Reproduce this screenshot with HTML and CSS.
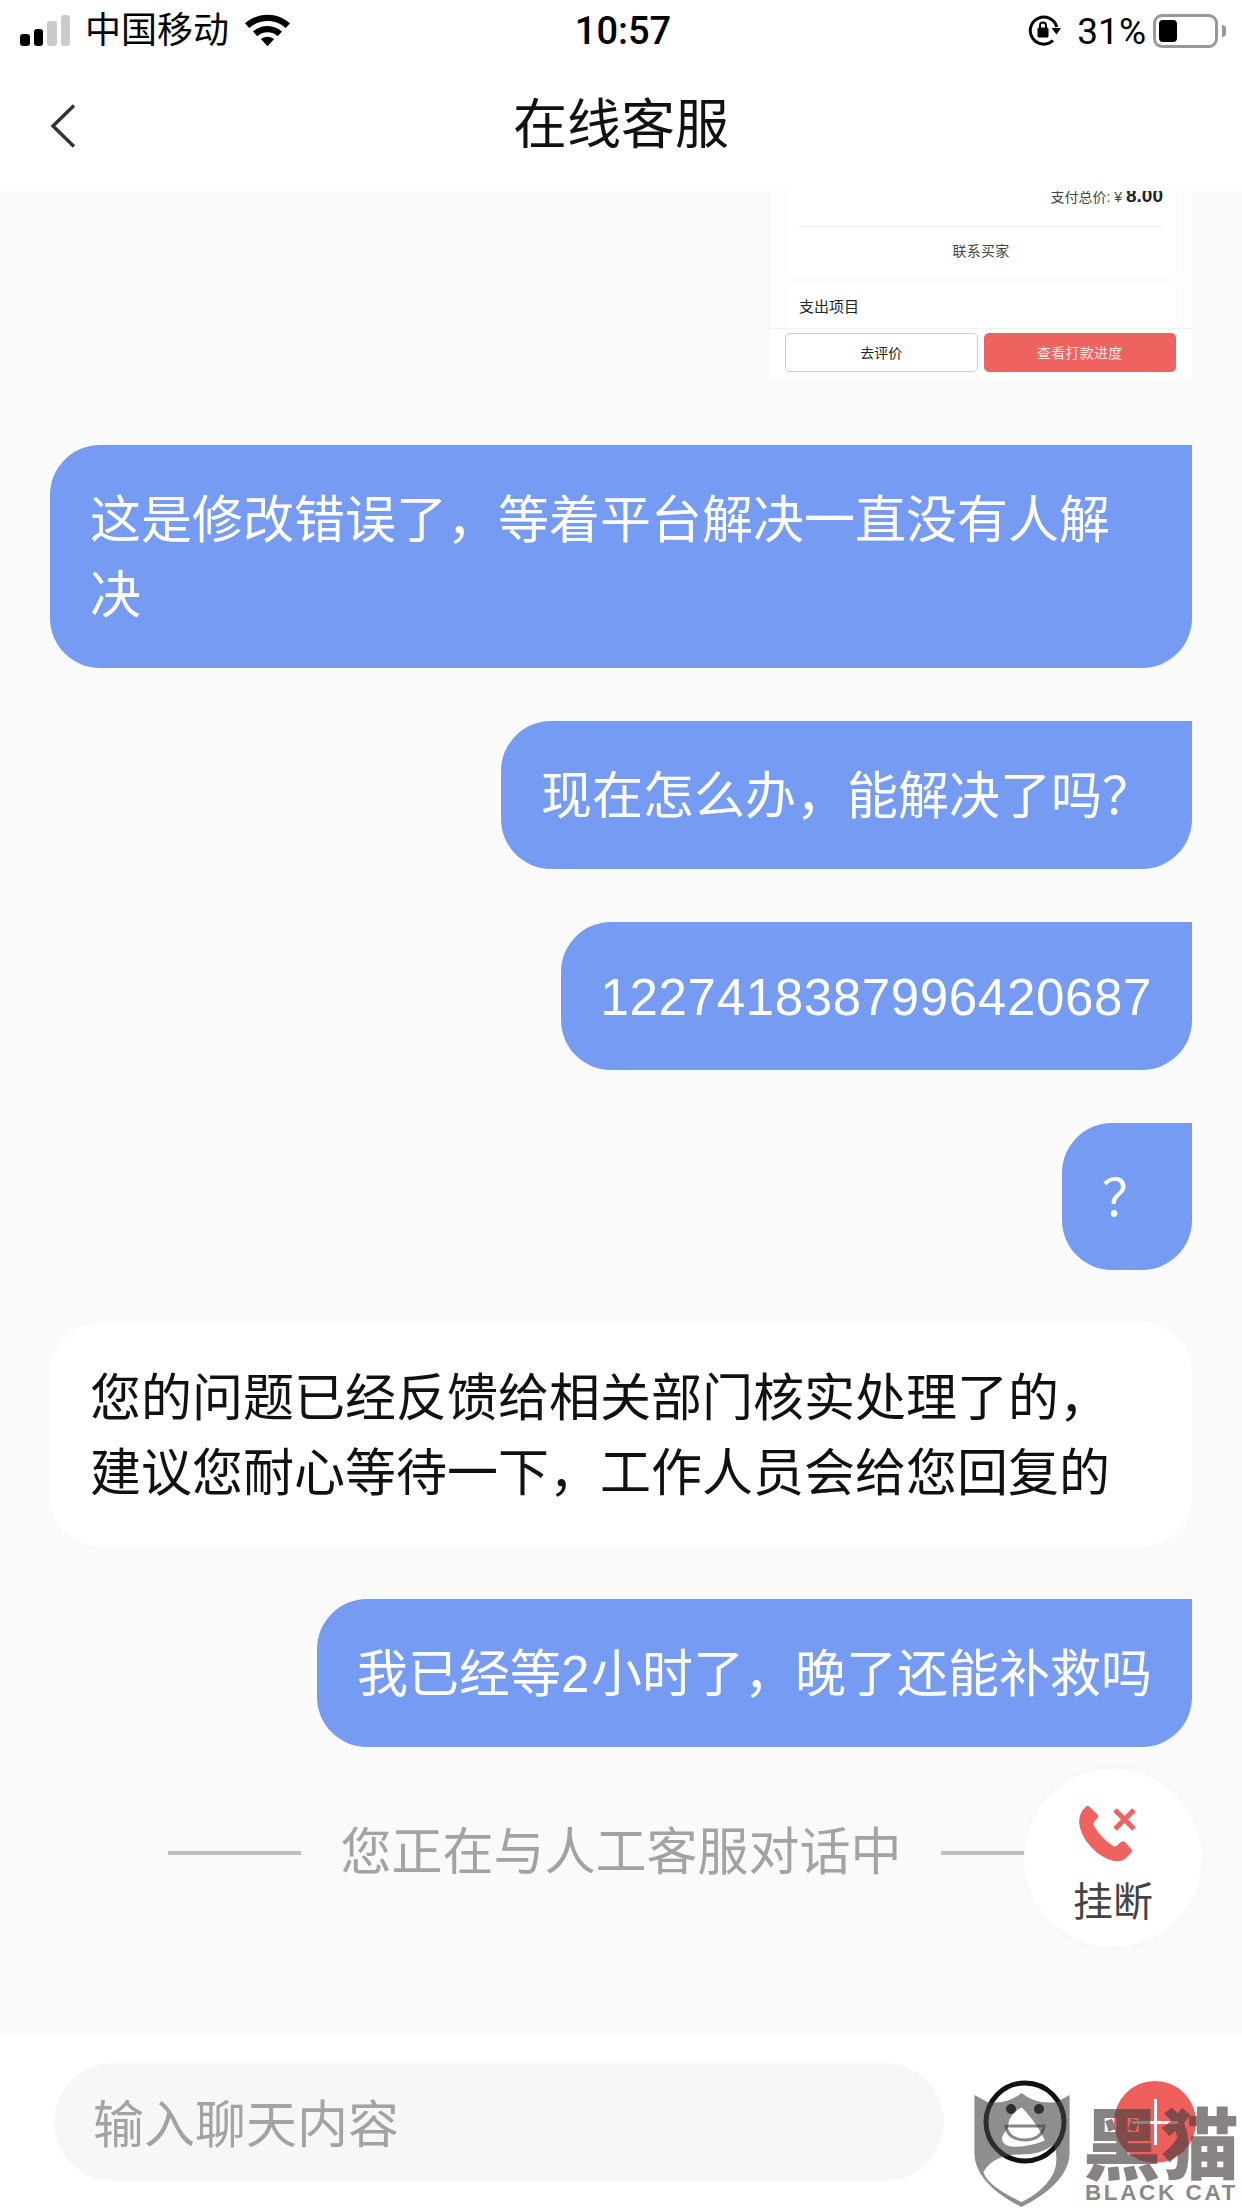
FILE: index.html
```html
<!DOCTYPE html>
<html lang="zh-CN">
<head>
<meta charset="utf-8">
<title>在线客服</title>
<link rel="stylesheet" href="styles.css">
</head>
<body>
<div class="app">
  <header class="top">
    <div class="status">
      <div class="status-left">
        <div class="signal"><i class="b1"></i><i class="b2"></i><i class="b3"></i><i class="b4"></i></div>
        <span class="carrier">中国移动</span>
        <svg class="wifi" viewBox="0 0 44 31"><path d="M22 0C13.500 0 6 3.300 0 8.500L4.200 13C9 8.800 15.200 6.200 22 6.200S35 8.800 39.800 13L44 8.500C38 3.300 30.500 0 22 0Z"/><path d="M22 11C16.500 11 11.600 13.100 7.800 16.500L12 21C14.700 18.600 18.200 17.200 22 17.200S29.300 18.600 32 21L36.200 16.500C32.400 13.100 27.500 11 22 11Z"/><path d="M22 21.500C19.500 21.500 17.300 22.400 15.500 23.800L22 31L28.500 23.800C26.700 22.400 24.500 21.500 22 21.500Z"/></svg>
      </div>
      <div class="time">10:57</div>
      <div class="status-right">
        <svg class="lock" viewBox="0 0 33 33"><path d="M25 25.500A13.500 13.500 0 1 1 28.800 12" fill="none" stroke="#000" stroke-width="3"/><path d="M23.500 13H33L28.500 19.500Z" fill="#000"/><rect x="9.500" y="12.500" width="11" height="10" rx="1.500" fill="#000"/><path d="M12 13V10.500A3 3 0 0 1 18 10.500V13" fill="none" stroke="#000" stroke-width="2"/></svg>
        <span class="pct">31%</span>
        <div class="battery"><div class="level"></div></div>
        <div class="cap"></div>
      </div>
    </div>
    <div class="nav">
      <svg class="back" viewBox="0 0 28 44"><path d="M26 1.500L5 22L26 42.500" fill="none" stroke="#333" stroke-width="3.500"/></svg>
      <h1 class="title">在线客服</h1>
    </div>
  </header>

  <main class="chat">
    <div class="shot">
      <div class="shot-scroll">
        <div class="card card-order">
          <div class="total">支付总价: ¥ <b>8.00</b></div>
          <div class="contact">联系买家</div>
        </div>
        <div class="card card-items">支出项目</div>
      </div>
      <div class="shot-actions">
        <div class="btn btn-plain">去评价</div>
        <div class="btn btn-red">查看打款进度</div>
      </div>
    </div>

    <div class="bubble me">这是修改错误了，等着平台解决一直没有人解决</div>
    <div class="bubble me">现在怎么办，能解决了吗<span class="q">？</span></div>
    <div class="bubble me digits">1227418387996420687</div>
    <div class="bubble me short"><span class="q">？</span></div>
    <div class="bubble them">您的问题已经反馈给相关部门核实处理了的，建议您耐心等待一下，工作人员会给您回复的</div>
    <div class="bubble me">我已经等<span class="num">2</span>小时了，晚了还能补救吗</div>

    <div class="notice">
      <span class="rule"></span>
      <span>您正在与人工客服对话中</span>
      <span class="rule"></span>
    </div>

    <div class="hangup">
      <svg class="phone" viewBox="0 0 58 57"><path d="M9.500 1L18 9Q20 11 18.500 13L15 17Q14 19 15 21Q22 33 34 41Q36 42 38 40.500L42 37Q44 35.500 46 37L52 44Q54 46 52 48L47 53Q43 57 35 56Q22 53 12 42Q1 30 0 17Q0 11 3 6L7 1.500Q8 .5 9.500 1Z" fill="#ee6360"/><path d="M36 5L55 24M55 5L36 24" stroke="#ee6360" stroke-width="5" fill="none"/></svg>
      <span class="hangup-label">挂断</span>
    </div>
  </main>

  <footer class="composer">
    <div class="field">输入聊天内容</div>
    <svg class="smile" viewBox="0 0 90 90"><circle cx="45" cy="45" r="39" fill="none" stroke="#111" stroke-width="5"/><circle cx="31" cy="32" r="5" fill="#111"/><circle cx="59" cy="32" r="5" fill="#111"/><path d="M26 49H64C63 59 54 63 45 63S27 59 26 49Z" fill="none" stroke="#8a8686" stroke-width="3"/></svg>
    <div class="plus"><span class="plus-h"></span><span class="plus-v"></span></div>
  </footer>

  <div class="watermark">
    <svg class="shield" viewBox="0 0 98 116"><path fill-rule="evenodd" d="M1 2L14 9Q34 12 48.500 0Q63 12 84 9L97 2V60C97 84 74 102 48.500 115C23 102 1 84 1 60ZM10 80C14 92 32 102 48.500 110C66 102 80 88 83 74C85 62 82 54 81 52C70 60 62 62 48 62C32 62 18 66 10 80ZM30 42C27 47 30 53 38 54C50 55 62 52 72 48C68 38 58 24 49 15C41 17 34 28 35 35C33 37 32 39 30 42Z"/></svg>
    <div class="wm-text">
      <div class="wm-cn">黑猫</div>
      <div class="wm-en">BLACK CAT</div>
    </div>
  </div>
</div>
</body>
</html>
```

FILE: styles.css
```css
* { box-sizing: border-box; }
html, body { margin: 0; padding: 0; }
body {
  font-family: "Liberation Sans", "Noto Sans CJK SC", sans-serif;
  background: #fff;
}
.app {
  position: relative;
  width: 1242px;
  height: 2208px;
  display: flex;
  flex-direction: column;
  overflow: hidden;
  background: #fff;
}
.top { height: 191px; background: #fff; flex: none; position: relative; z-index: 2; }
.status {
  height: 62px;
  display: grid;
  grid-template-columns: 1fr auto 1fr;
  align-items: center;
  padding: 0 16px 0 20px;
}
.status-left { display: flex; align-items: center; }
.signal { display: flex; align-items: flex-end; gap: 4px; height: 31px; width: 51px; margin-top: -2px; flex: none; }
.signal i { display: block; width: 9.500px; border-radius: 3px; }
.b1 { height: 12px; background: #000; }
.b2 { height: 17px; background: #000; }
.b3 { height: 25px; background: #cbcbcb; }
.b4 { height: 31px; background: #cbcbcb; }
.carrier { font-size: 36px; margin-left: 14px; color: #000; line-height: 40px; }
.wifi { width: 45px; height: 33px; margin-left: 16px; margin-top: -2px; }
.time { font-family: Roboto, sans-serif; font-weight: 500; font-size: 38px; color: #000; }
.status-right { display: flex; align-items: center; justify-content: flex-end; }
.lock { width: 33px; height: 33px; margin-top: 1px; }
.pct { font-family: Roboto, sans-serif; font-size: 37px; margin-left: 16px; color: #000; }
.battery { width: 65px; height: 34px; border: 3px solid #999; border-radius: 9px; padding: 3px; margin-left: 7px; }
.level { width: 18px; height: 100%; background: #000; border-radius: 4px; }
.cap { width: 4px; height: 12px; background: #999; border-radius: 0 4px 4px 0; margin-left: 4px; }
.nav { height: 129px; display: flex; align-items: center; justify-content: center; position: relative; }
.back { position: absolute; left: 48px; top: 42px; width: 28px; height: 44px; }
.title { margin: 0; font-size: 54px; font-weight: 400; color: #111; line-height: 64px; position: relative; top: -2px; }

.chat {
  flex: 1;
  background: #fafafa;
  padding: 0 50px;
  display: flex;
  flex-direction: column;
  align-items: flex-end;
  gap: 53px;
  position: relative;
}
.shot {
  width: 422px;
  height: 187px;
  margin-bottom: 14px;
  background: #fff;
  display: flex;
  flex-direction: column;
  overflow: hidden;
  flex: none;
}
.shot-scroll { height: 137px; padding: 0 16px; overflow: hidden; flex: none; background: #fdfdfd; }
.card { background: #fff; border-radius: 7px; box-shadow: 0 0 3px rgba(0,0,0,.05); }
.card-order { height: 86px; padding: 0 13px; display: flex; flex-direction: column; }
.total { height: 36px; border-bottom: 1px solid #f2f2f2; text-align: right; font-size: 14px; line-height: 9px; color: #444; flex: none; }
.total b { font-size: 19px; font-weight: 700; color: #222; }
.contact { flex: 1; display: flex; align-items: center; justify-content: center; font-size: 14px; color: #444; letter-spacing: .3px; padding-bottom: 4px; }
.card-items { margin-top: 5px; height: 60px; padding: 10px 13px 0; font-size: 15px; line-height: 30px; color: #222; }
.shot-actions { flex: 1; display: flex; gap: 6px; padding: 4px 16px 0 15px; border-top: 1px solid #f1f1f1; background: #fff; }
.btn { width: 193px; height: 39px; border-radius: 5px; display: flex; align-items: center; justify-content: center; font-size: 14px; padding-bottom: 2px; }
.btn-plain { border: 1px solid #ccc; color: #222; }
.btn-red { background: #ee6360; color: #fbe8e8; letter-spacing: .3px; }

.bubble {
  padding: 38px 40px 35px;
  font-size: 51px;
  line-height: 75px;
  flex: none;
  max-width: 1142px;
}
.me { background: #769bf2; color: #fff; border-radius: 50px 0 50px 50px; }
.them { background: #fff; color: #111; border-radius: 50px; }
.short { padding-bottom: 34px; }
.digits { letter-spacing: .66px; }
.q { letter-spacing: -1px; }
.num { letter-spacing: 1.600px; }
.notice {
  align-self: center;
  display: flex;
  align-items: center;
  gap: 39px;
  margin-top: 15px;
  font-size: 51px;
  line-height: 75px;
  color: #a3a3a3;
}
.rule { width: 133px; height: 4px; background: #c0c0c0; }
.hangup {
  position: absolute;
  left: 1024px;
  top: 1578px;
  width: 178px;
  height: 178px;
  border-radius: 50%;
  background: #fff;
  box-shadow: 0 0 12px rgba(0,0,0,.02);
  display: flex;
  flex-direction: column;
  align-items: center;
}
.phone { width: 58px; height: 57px; margin: 36px 10px 0 0; }
.hangup-label { font-size: 40px; line-height: 46px; color: #444; margin-top: 17px; }

.composer {
  height: 173px;
  flex: none;
  background: #fff;
  display: flex;
  align-items: flex-start;
  padding: 28px 0 0 54px;
  position: relative;
}
.field {
  width: 890px;
  height: 118px;
  border-radius: 59px;
  background: #f7f7f7;
  color: #a3a3a3;
  font-size: 51px;
  line-height: 118px;
  padding: 4px 0 0 39px;
  flex: none;
}
.smile { position: absolute; left: 980px; top: 42px; width: 90px; height: 90px; }
.plus { position: absolute; left: 1114px; top: 46px; width: 82px; height: 82px; border-radius: 50%; background: #ee5f5c; }
.plus-h { position: absolute; left: 18px; top: 40px; width: 46px; height: 3px; background: #fff; }
.plus-v { position: absolute; left: 40px; top: 18px; width: 3px; height: 46px; background: #fff; }

.watermark {
  position: absolute;
  left: 973px;
  top: 2093px;
  width: 269px;
  height: 115px;
  display: flex;
  gap: 12px;
  align-items: flex-start;
}
.shield { width: 98px; height: 115px; flex: none; fill: rgba(70,65,65,.6); }
.wm-text { display: flex; flex-direction: column; }
.wm-cn { font-size: 78px; font-weight: 900; line-height: 80px; margin-top: 14px; color: rgba(70,65,65,.65); white-space: nowrap; }
.wm-en { font-family: "Liberation Sans", sans-serif; font-weight: 700; font-size: 22.500px; line-height: 20px; margin-top: -4px; margin-left: 2px; color: rgba(70,65,65,.65); letter-spacing: 2.600px; white-space: nowrap; }
```
